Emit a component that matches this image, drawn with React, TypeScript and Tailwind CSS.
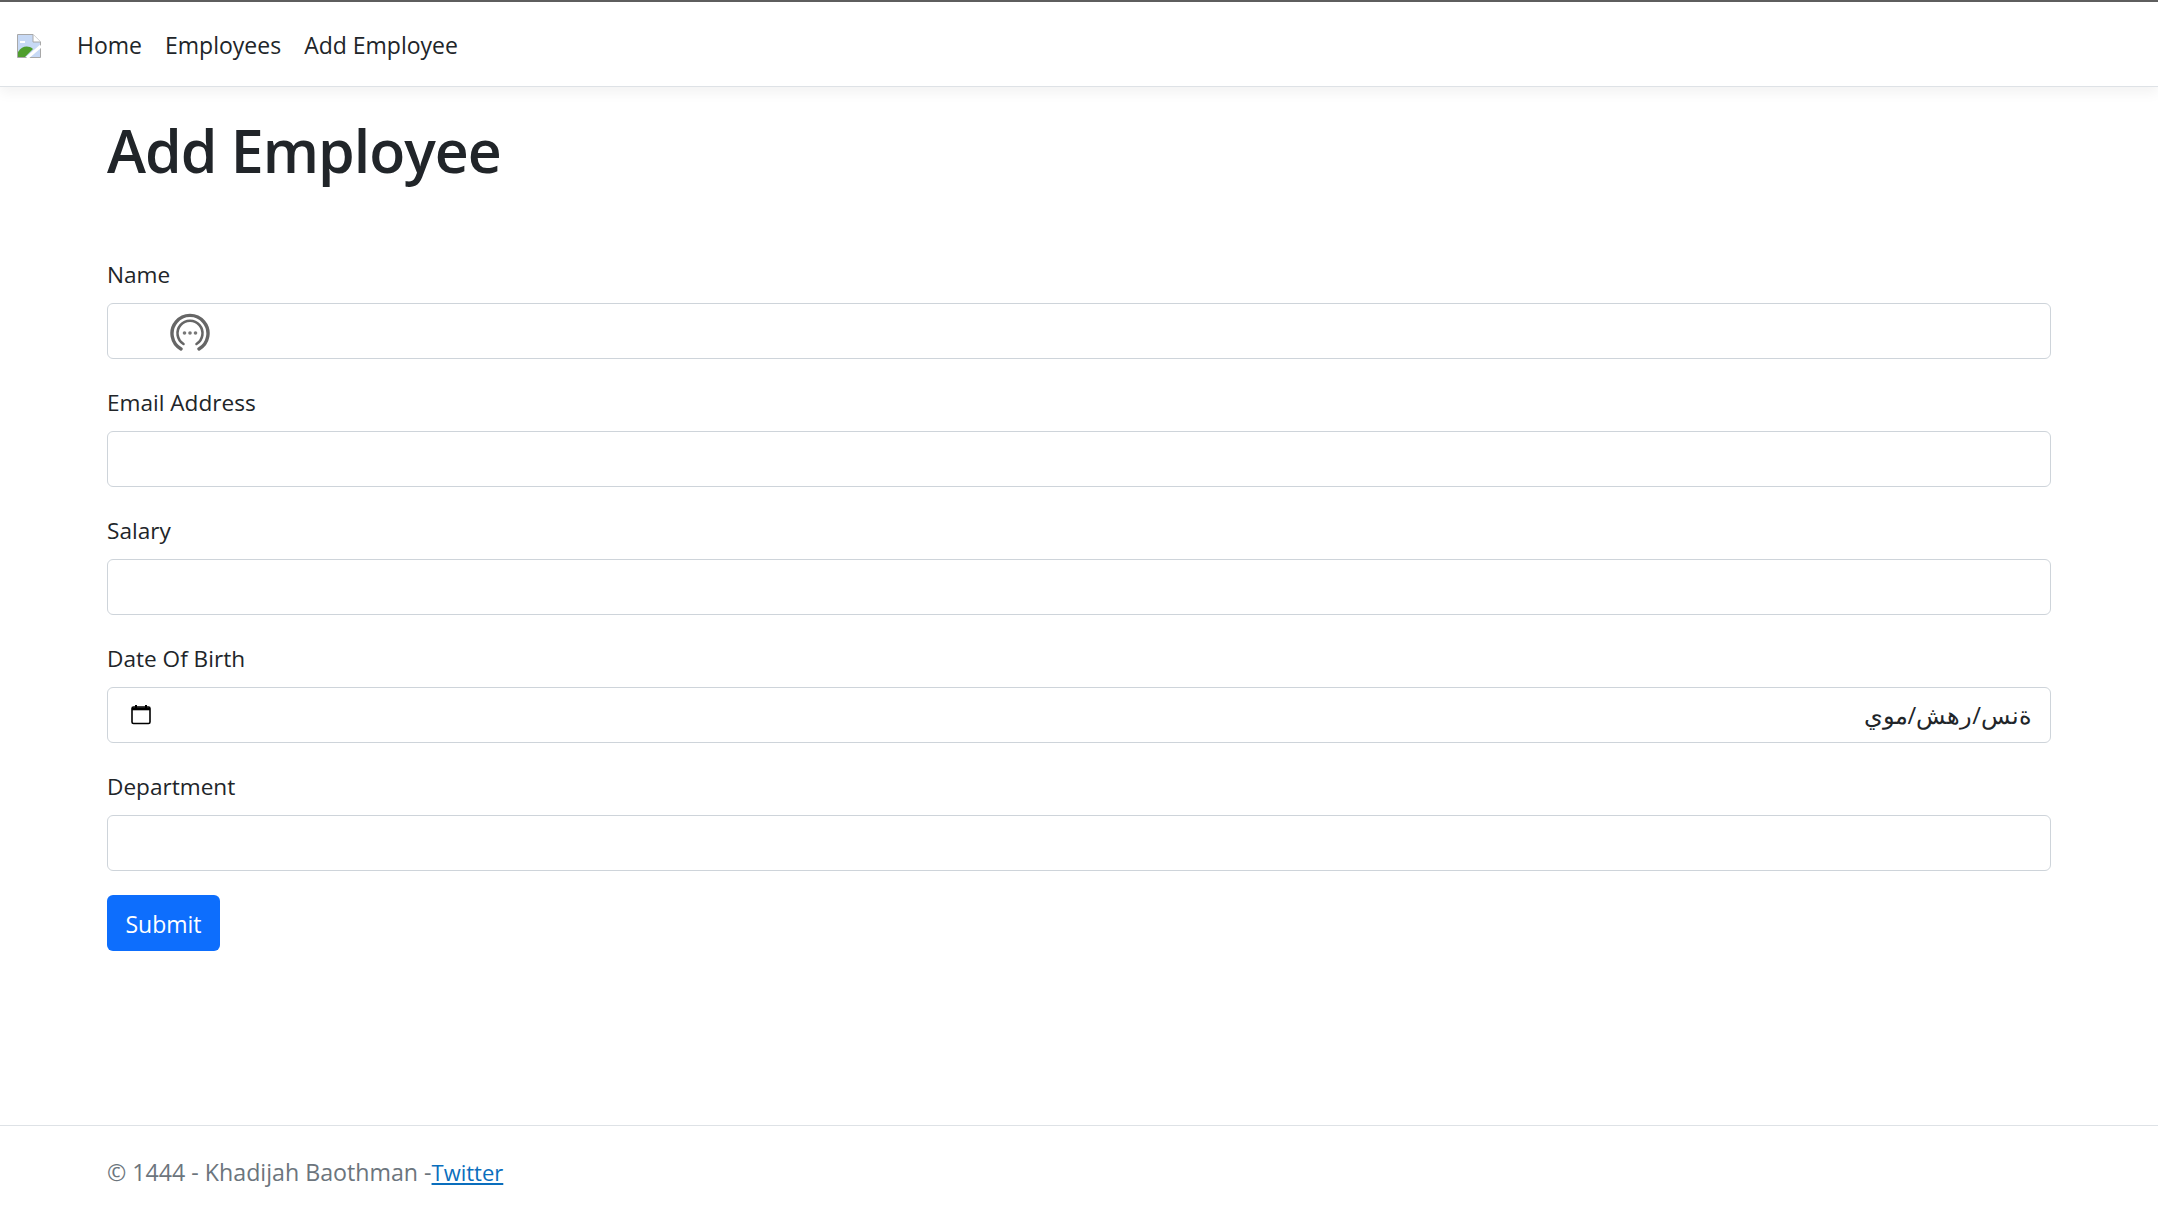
const font = { fontFamily: '"Open Sans", "Noto Sans", sans-serif' };

function BrokenImage() {
  return (
    <svg width="24" height="24" viewBox="0 0 24 24" className="block mt-[4px]">
      <path d="M0.5 0.5H16L23.5 8V23.5H0.5Z" fill="#c7d9f5" stroke="#a8a8a8" />
      <path d="M16 0.5V8H23.5" fill="#fff" stroke="#a8a8a8" />
      <path d="M1 23V18C5 12 11 11 16 15L8 23Z" fill="#4f9e2d" />
      <path d="M3 7h5v2H3z" fill="#fff" />
      <path d="M10 24L24 12" stroke="#fff" strokeWidth="3" />
    </svg>
  );
}

function PasswordIcon() {
  return (
    <svg width="40" height="40" viewBox="0 0 40 40" fill="none" className="block">
      <path d="M11 36A18 18 0 1 1 29 36" stroke="#666" strokeWidth="3.4" strokeLinecap="round" />
      <path d="M13.5 31A12.5 12.5 0 1 1 26.5 31" stroke="#666" strokeWidth="2.6" strokeLinecap="round" />
      <circle cx="14.5" cy="20" r="1.8" fill="#777" />
      <circle cx="20" cy="20" r="1.8" fill="#777" />
      <circle cx="25.5" cy="20" r="1.8" fill="#777" />
    </svg>
  );
}

function CalendarIcon() {
  return (
    <svg width="22" height="22" viewBox="0 0 22 22" className="block">
      <path d="M2 4.5h18v2.8H2z" fill="#000" />
      <path d="M5 2h2v3H5zM15 2h2v3h-2z" fill="#000" />
      <rect x="2" y="4" width="18" height="16.5" rx="1.5" fill="none" stroke="#000" strokeWidth="1.6" />
    </svg>
  );
}

function Field({ label, children }: { label: string; children?: React.ReactNode }) {
  return (
    <div className="mb-[27px] last-of-type:mb-[24px]">
      <label className="block h-[33px] mb-[12px] text-[22.6px] leading-[33px] text-[#212529]">{label}</label>
      <div className="h-[56px] flex items-center rounded-[6px] border border-[#ced4da] bg-white relative">{children}</div>
    </div>
  );
}

export default function App() {
  return (
    <div className="min-h-[1213px] bg-white flex flex-col" style={font}>
      <div className="h-[2px] bg-[#5f5f5f]" />
      <nav className="h-[85px] flex items-center pl-[17px] border-b border-[#dee2e6] shadow-[0_6px_12px_rgba(0,0,0,0.05)] bg-white">
        <BrokenImage />
        <div className="flex ml-[36px] mt-[3px] gap-[23px] text-[23px] text-[#212529]">
          <a>Home</a>
          <a>Employees</a>
          <a>Add Employee</a>
        </div>
      </nav>
      <main className="flex-1 pl-[107px] pr-[107px]">
        <h1 className="mt-[35px] h-[56px] text-[59px] leading-[56px] font-semibold text-[#212529] tracking-[-1px]">Add Employee</h1>
        <form className="mt-[80px]">
          <Field label="Name">
            <span className="ml-[62px] mt-[3px]"><PasswordIcon /></span>
          </Field>
          <Field label="Email Address" />
          <Field label="Salary" />
          <Field label="Date Of Birth">
            <span className="ml-[22px] -mt-[3px]"><CalendarIcon /></span>
            <span className="ml-auto mr-[18px] mt-[2px] text-[23.8px] text-[#212529]" dir="rtl">ةنس/رهش/موي</span>
          </Field>
          <Field label="Department" />
          <button type="button" className="h-[56px] w-[113px] pt-[2px] rounded-[6px] bg-[#0d6efd] text-white text-[23px]">Submit</button>
        </form>
      </main>
      <footer className="h-[88px] border-t border-[#dee2e6] px-[107px] pt-[30px] text-[23.2px] leading-[33px] text-[#6c757d]">
        © 1444 - Khadijah Baothman -<a className="text-[22px] text-[#0a6ebd] underline">Twitter</a>
      </footer>
    </div>
  );
}
